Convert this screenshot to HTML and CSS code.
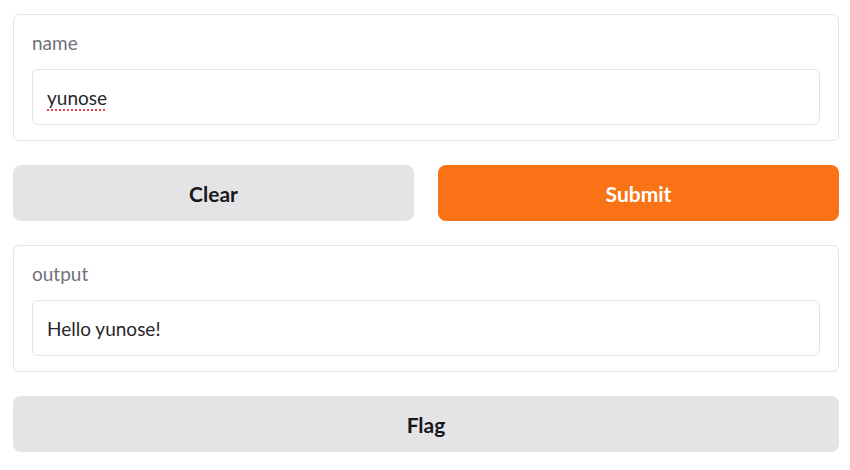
FILE: index.html
```html
<!DOCTYPE html>
<html>
<head>
<meta charset="utf-8">
<link rel="stylesheet" href="styles.css">
</head>
<body>
<div class="app">
  <div class="card">
    <div class="label">name</div>
    <div class="field"><span class="spell">yunose</span></div>
  </div>
  <div class="row">
    <button class="btn secondary">Clear</button>
    <button class="btn primary">Submit</button>
  </div>
  <div class="card">
    <div class="label">output</div>
    <div class="field">Hello yunose!</div>
  </div>
  <button class="btn secondary">Flag</button>
</div>
</body>
</html>
```
FILE: styles.css
```css
html, body {
  margin: 0;
  padding: 0;
  background: #ffffff;
}
body {
  font-family: "Lato", "Open Sans", sans-serif;
  color: #27272a;
}
.app {
  width: 826px;
  padding: 14px 0 0 13px;
  display: flex;
  flex-direction: column;
  gap: 24px;
}
.card {
  border: 1px solid #e4e4e7;
  border-radius: 6px;
  padding: 17px 18px 15px;
  display: flex;
  flex-direction: column;
  gap: 15px;
}
.label {
  font-size: 19px;
  line-height: 22px;
  color: #71717a;
}
.field {
  height: 54px;
  border: 1px solid #e4e4e7;
  border-radius: 6px;
  padding: 0 14px;
  display: flex;
  align-items: center;
  font-size: 19px;
  color: #27272a;
}
.spell {
  text-decoration: underline dotted #ef4444;
  text-decoration-thickness: 2px;
  text-underline-offset: 5px;
}
.row {
  display: flex;
  gap: 24px;
}
.row .btn { flex: 1; }
.btn {
  height: 56px;
  border: none;
  border-radius: 8px;
  font-family: "Lato", "Open Sans", sans-serif;
  font-weight: 700;
  font-size: 21px;
  cursor: pointer;
}
.secondary {
  background: #e4e4e7;
  color: #18181b;
}
.primary {
  background: #f97316;
  color: #ffffff;
}
```
